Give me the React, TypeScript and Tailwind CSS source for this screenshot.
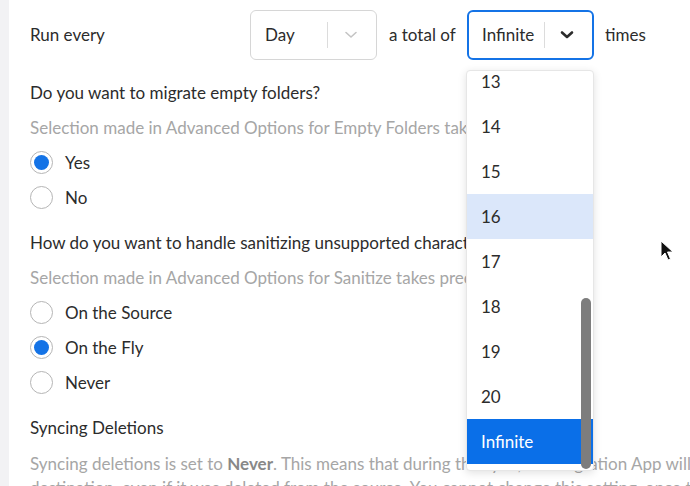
import React from 'react';

const options = ['13', '14', '15', '16', '17', '18', '19', '20', 'Infinite'];

const Radio = ({ label, checked }: { label: string; checked?: boolean }) => (
  <label className="flex h-[35px] items-center gap-[12px]">
    <span className="flex h-[23px] w-[23px] items-center justify-center rounded-full border border-[#b5b5b5] bg-white">
      {checked && <span className="h-[15px] w-[15px] rounded-full bg-[#1473e6]" />}
    </span>
    <span className="text-[#2c2c2c]">{label}</span>
  </label>
);

const Chevron = ({ color, width }: { color: string; width: number }) => (
  <svg width="16" height="10" viewBox="0 0 16 10" fill="none">
    <path d="M3 2.5 L8 7 L13 2.5" stroke={color} strokeWidth={width} strokeLinecap="round" strokeLinejoin="round" />
  </svg>
);

const App: React.FC = () => {
  return (
    <div className="relative flex h-[486px] w-[690px] overflow-hidden bg-white text-[17px] font-['Lato',sans-serif]">
      <div className="w-[9px] shrink-0 bg-[#f2f2f4]" />
      <div className="flex-1 pl-[21px]">
        <div className="mt-[10px] flex h-[50px] items-center">
          <span className="w-[220px] text-[#2c2c2c]">Run every</span>
          <div className="flex h-[50px] w-[127px] items-center rounded-md border border-[#d6d6d6] pl-[14px]">
            <span className="w-[62px] text-[#2c2c2c]">Day</span>
            <span className="h-[26px] w-px bg-[#dcdcdc]" />
            <span className="ml-[15px]"><Chevron color="#c4c4c4" width={1.6} /></span>
          </div>
          <span className="ml-[12px] w-[78px] text-[#2c2c2c]">a total of</span>
          <div className="flex h-[50px] w-[127px] items-center rounded-md border-2 border-[#1473e6] pl-[13px]">
            <span className="w-[62px] text-[#2c2c2c]">Infinite</span>
            <span className="h-[26px] w-px bg-[#dcdcdc]" />
            <span className="ml-[14px]"><Chevron color="#2c2c2c" width={2.6} /></span>
          </div>
          <span className="ml-[11px] text-[#2c2c2c]">times</span>
        </div>

        <div className="mt-[15px] flex h-[35px] items-center text-[#2c2c2c]">Do you want to migrate empty folders?</div>
        <div className="flex h-[35px] items-center whitespace-nowrap text-[#a6a6a6]">
          Selection made in Advanced Options for Empty Folders takes precedence.
        </div>
        <Radio label="Yes" checked />
        <Radio label="No" />

        <div className="mt-[10px] flex h-[35px] items-center whitespace-nowrap text-[#2c2c2c]">
          How do you want to handle sanitizing unsupported characters?
        </div>
        <div className="flex h-[35px] items-center whitespace-nowrap text-[#a6a6a6]">
          Selection made in Advanced Options for Sanitize takes precedence.
        </div>
        <Radio label="On the Source" />
        <Radio label="On the Fly" checked />
        <Radio label="Never" />

        <div className="mt-[10px] flex h-[35px] items-center text-[#2c2c2c]">Syncing Deletions</div>
        <p className="mt-[7px] whitespace-nowrap leading-[24px] text-[#a6a6a6]">
          Syncing deletions is set to <b className="font-bold text-[#888888]">Never</b>. This means that during the sync, the Migration App will not delete files from the
          <br />
          destination, even if it was deleted from the source. You cannot change this setting, once the migration has started.
        </p>
      </div>

      {/* open dropdown menu */}
      <div className="absolute left-[466px] top-[70px] h-[401px] w-[128px] overflow-hidden rounded-[4px] border border-[#e6e6e6] bg-white shadow-[0_2px_8px_rgba(0,0,0,0.12)]">
        <div className="-mt-[12px] flex flex-col">
          {options.map((o) => (
            <div
              key={o}
              className={
                o === '16'
                  ? 'flex h-[45px] shrink-0 items-center bg-[#dbe7fa] pl-[14px] text-[#2c2c2c]'
                  : o === 'Infinite'
                  ? 'flex h-[45px] shrink-0 items-center bg-[#0a6fe8] pl-[14px] text-white'
                  : 'flex h-[45px] shrink-0 items-center pl-[14px] text-[#2c2c2c]'
              }
            >
              {o}
            </div>
          ))}
        </div>
        <div className="absolute left-[114px] top-[227px] h-[171px] w-[10px] rounded-full bg-[#7d7d7d]" />
      </div>

      {/* mouse cursor */}
      <svg className="absolute left-[660px] top-[240px]" width="14" height="22" viewBox="0 0 14 22">
        <path d="M1 1 L1 17 L5 13 L8 20 L10.5 19 L7.5 12 L13 12 Z" fill="#111" stroke="#fff" strokeWidth="1" />
      </svg>
    </div>
  );
};

export default App;
